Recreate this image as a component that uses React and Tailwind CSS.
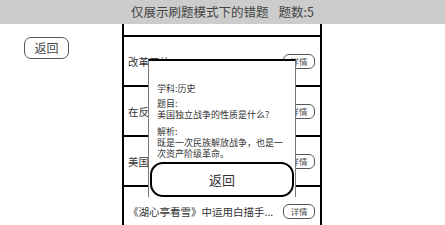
const rows = [
  { title: '改革开放' },
  { title: '在反法西斯' },
  { title: '美国独立' },
  { title: '《湖心亭看雪》中运用白描手...' },
];

export default function App() {
  return (
    <div
      className="relative h-[225px] w-[445px] overflow-hidden bg-white text-[#333]"
      style={{ fontFamily: '"Noto Sans CJK SC", "Noto Sans", sans-serif' }}
    >
      {/* header */}
      <div className="flex h-[24px] items-center justify-center gap-[10px] bg-[#cccccc] text-[12.5px] text-[#444]">
        <span>仅展示刷题模式下的错题</span>
        <span>题数:5</span>
      </div>

      <div className="flex">
        <div className="w-[122px] pl-[24px] pt-[13px]">
          <button className="flex h-[22px] w-[45px] items-center justify-center rounded-[7px] border border-[#555] text-[12px] text-[#444]">
            返回
          </button>
        </div>

        {/* list */}
        <div className="h-[201px] w-[200px] border-x-2 border-black">
          <div className="h-[13px] border-b-2 border-black" />
          {rows.map((r, i) => (
            <div
              key={i}
              className="flex h-[50px] items-center justify-between border-b-2 border-black pl-[4px] pr-[5px] pt-[1px]"
            >
              <span className="whitespace-nowrap text-[10.5px] text-[#333]">{r.title}</span>
              <button className="flex h-[15px] w-[32px] shrink-0 items-center justify-center rounded-[6px] border border-[#555] text-[8.5px] text-[#555]">
                详情
              </button>
            </div>
          ))}
        </div>
      </div>

      {/* modal */}
      <div className="absolute left-[148px] top-[59px] flex h-[138px] w-[148px] flex-col border-x border-t-2 border-x-[#777] border-t-black bg-white">
        <div className="flex-1 px-[8px] pt-[22px] text-[9px] leading-[11px] text-[#333]">
          <div>学科:历史</div>
          <div className="mt-[4px]">
            <div>题目:</div>
            <div>美国独立战争的性质是什么?</div>
          </div>
          <div className="mt-[6px]">
            <div>解析:</div>
            <div>既是一次民族解放战争，也是一次资产阶级革命。</div>
          </div>
        </div>
        <button className="mx-[1px] flex h-[35px] items-center justify-center rounded-[13px] border-2 border-black bg-white text-[13px] text-[#333]">
          返回
        </button>
      </div>
    </div>
  );
}
